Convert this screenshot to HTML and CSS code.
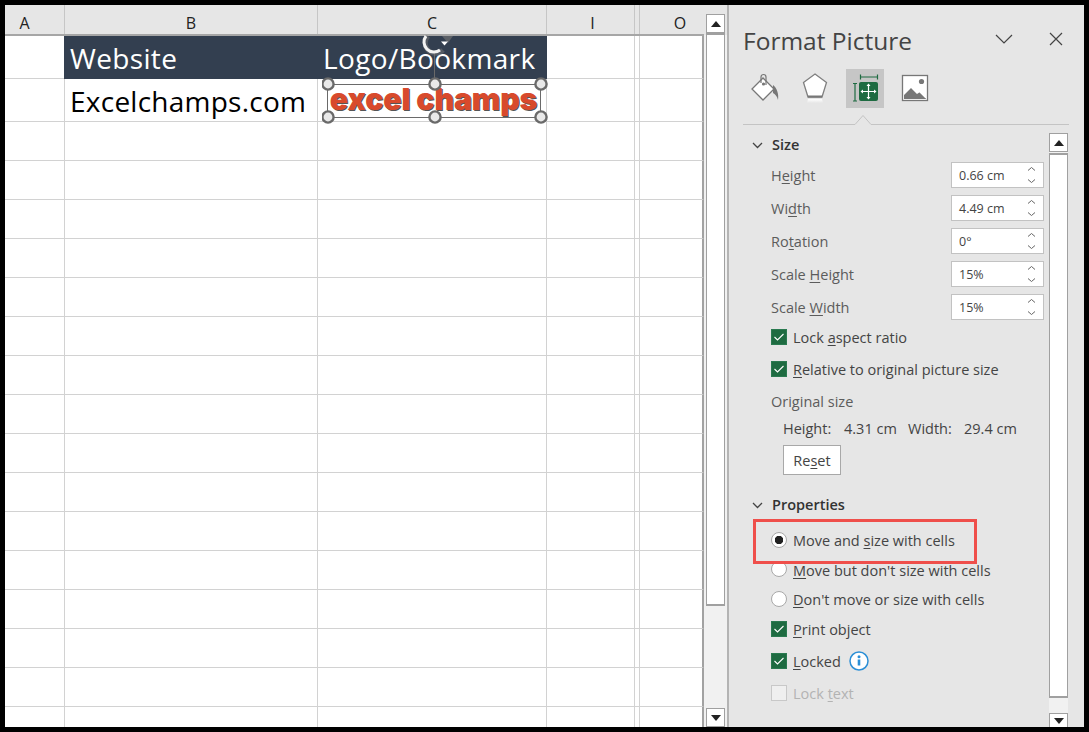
FILE: index.html
```html
<!DOCTYPE html>
<html lang="en">
<head>
<meta charset="utf-8">
<title>Format Picture</title>
<link rel="stylesheet" href="styles.css">
</head>
<body>
<div class="app">
  <main class="sheet">
    <div class="row head"><div class="ch a">A</div><div class="ch">B</div><div class="ch">C</div><div class="ch i">I</div><div class="ch"></div><div class="ch o">O</div></div>
    <div class="row r43"><div class="c"></div><div class="c dark">Website</div><div class="c dark">Logo/Bookmark</div><div class="c"></div><div class="c"></div><div class="c"></div></div>
    <div class="row r43"><div class="c"></div><div class="c val">Excelchamps.com</div><div class="c"></div><div class="c"></div><div class="c"></div><div class="c"></div></div>
    <div class="row"><div class="c"></div><div class="c"></div><div class="c"></div><div class="c"></div><div class="c"></div><div class="c"></div></div>
    <div class="row"><div class="c"></div><div class="c"></div><div class="c"></div><div class="c"></div><div class="c"></div><div class="c"></div></div>
    <div class="row"><div class="c"></div><div class="c"></div><div class="c"></div><div class="c"></div><div class="c"></div><div class="c"></div></div>
    <div class="row"><div class="c"></div><div class="c"></div><div class="c"></div><div class="c"></div><div class="c"></div><div class="c"></div></div>
    <div class="row"><div class="c"></div><div class="c"></div><div class="c"></div><div class="c"></div><div class="c"></div><div class="c"></div></div>
    <div class="row"><div class="c"></div><div class="c"></div><div class="c"></div><div class="c"></div><div class="c"></div><div class="c"></div></div>
    <div class="row"><div class="c"></div><div class="c"></div><div class="c"></div><div class="c"></div><div class="c"></div><div class="c"></div></div>
    <div class="row"><div class="c"></div><div class="c"></div><div class="c"></div><div class="c"></div><div class="c"></div><div class="c"></div></div>
    <div class="row"><div class="c"></div><div class="c"></div><div class="c"></div><div class="c"></div><div class="c"></div><div class="c"></div></div>
    <div class="row"><div class="c"></div><div class="c"></div><div class="c"></div><div class="c"></div><div class="c"></div><div class="c"></div></div>
    <div class="row"><div class="c"></div><div class="c"></div><div class="c"></div><div class="c"></div><div class="c"></div><div class="c"></div></div>
    <div class="row"><div class="c"></div><div class="c"></div><div class="c"></div><div class="c"></div><div class="c"></div><div class="c"></div></div>
    <div class="row"><div class="c"></div><div class="c"></div><div class="c"></div><div class="c"></div><div class="c"></div><div class="c"></div></div>
    <div class="row"><div class="c"></div><div class="c"></div><div class="c"></div><div class="c"></div><div class="c"></div><div class="c"></div></div>
    <div class="row"><div class="c"></div><div class="c"></div><div class="c"></div><div class="c"></div><div class="c"></div><div class="c"></div></div>
    <div class="row"><div class="c"></div><div class="c"></div><div class="c"></div><div class="c"></div><div class="c"></div><div class="c"></div></div>
    <div class="logo">excel champs</div>
    <svg class="selection" width="240" height="100" viewBox="0 0 240 100">
      <path d="M112.500 16V55" stroke="#6a6a6a" fill="none"/>
      <rect x="5.500" y="49.500" width="213" height="33" fill="none" stroke="#6a6a6a"/>
      <path d="M106 1A10 10 0 0 0 121 15" fill="none" stroke="#777" stroke-opacity=".5" stroke-width="5"/>
      <path d="M120 1h11l-5 7z" fill="#777" fill-opacity=".6"/>
      <path d="M104 1A10 10 0 0 0 118 15" fill="none" stroke="#f2f2f2" stroke-width="3"/>
      <path d="M119 6.500h7l-3.500 4z" fill="#fff"/>
      <g fill="#e9e9e9" stroke="#6a6a6a" stroke-width="2.400">
        <circle cx="6" cy="49" r="5.600"/><circle cx="113" cy="49" r="5.600"/><circle cx="219" cy="49" r="5.600"/>
        <circle cx="6" cy="82" r="5.600"/><circle cx="113" cy="82" r="5.600"/><circle cx="219" cy="82" r="5.600"/>
      </g>
    </svg>
  </main>

  <div class="vscroll">
    <div class="sb-btn"><svg width="10" height="6" viewBox="0 0 10 6"><path d="M5 0l5 6H0z" fill="#222"/></svg></div>
    <div class="sb-thumb sheet-thumb"></div>
    <div class="sb-btn bottom"><svg width="10" height="6" viewBox="0 0 10 6"><path d="M0 0h10L5 6z" fill="#222"/></svg></div>
  </div>

  <aside class="panel">
    <header class="panel-head">
      <h1 class="title">Format Picture</h1>
      <svg class="head-chev" width="18" height="10" viewBox="0 0 18 10"><path d="M1 1l8 8 8-8" fill="none" stroke="#444" stroke-width="1.200"/></svg>
      <svg class="head-x" width="14" height="14" viewBox="0 0 14 14"><path d="M1 1l12 12M13 1L1 13" fill="none" stroke="#444" stroke-width="1.200"/></svg>
    </header>

    <nav class="tabs">
      <div class="tab">
        <svg width="38" height="39" viewBox="0 0 38 39">
          <path d="M27 16c4 3 6 9 5 15-1-4-3-6-5-7z" fill="#777"/>
          <path d="M17 9l11 11-11 11L6 20z" fill="#fff" stroke="#777" stroke-width="1.300"/>
          <path d="M15 14V8a2.500 2.500 0 0 1 5 0v8" fill="none" stroke="#777" stroke-width="1.200"/>
          <circle cx="17.500" cy="15" r="1.600" fill="#777"/>
        </svg>
      </div>
      <div class="tab">
        <svg width="38" height="39" viewBox="0 0 38 39">
          <defs><linearGradient id="fade" x1="0" y1="0" x2="0" y2="1"><stop offset="0" stop-color="#fff"/><stop offset="1" stop-color="#e6e6e6"/></linearGradient></defs>
          <path d="M19 5l11.500 8.500L26 28H12L7.500 13.500z" fill="#fff" stroke="#808080" stroke-width="1.300"/>
          <path d="M12 30h14l1 4H11z" fill="url(#fade)"/>
          <path d="M12 27.500h14" stroke="#777" stroke-width="2"/>
        </svg>
      </div>
      <div class="tab active">
        <svg width="38" height="39" viewBox="0 0 38 39">
          <path d="M14.500 8h17M14.500 5.500v5M31.500 5.500v5M7 14.500h4M7 32h4M9 14.500V32" fill="none" stroke="#1e6b41" stroke-width="1.200"/>
          <rect x="13" y="13" width="19" height="19" rx="2" fill="#1e6b41"/>
          <path d="M22.500 15.500v14M15.500 22.500h14" stroke="#fff" stroke-width="1.200"/>
          <path d="M22.500 14.500l2 2.500h-4zM22.500 30.500l2-2.500h-4zM14.500 22.500l2.500-2v4zM30.500 22.500l-2.500-2v4z" fill="#fff"/>
        </svg>
      </div>
      <div class="tab">
        <svg width="38" height="39" viewBox="0 0 38 39">
          <rect x="6.500" y="6.500" width="25" height="25" fill="#fff" stroke="#777" stroke-width="1.300"/>
          <path d="M8 30V26l7-7 6 6 3-2 6 6v1z" fill="#777"/>
          <path d="M21 20l9 9" stroke="#fff" stroke-width="1.200"/>
          <circle cx="25.500" cy="12.500" r="2.600" fill="#777"/>
        </svg>
      </div>
    </nav>

    <svg class="divider" width="326" height="18" viewBox="0 0 326 18"><path d="M0 16.500h112l8-9 8 9h198" fill="none" stroke="#c4c4c4"/></svg>

    <div class="panel-body">
      <div class="content">
        <div class="sec-head first">
          <svg width="11" height="7" viewBox="0 0 11 7"><path d="M1 1l4.500 4.500L10 1" fill="none" stroke="#444" stroke-width="1.300"/></svg>
          <span>Size</span>
        </div>
        <div class="fields">
          <div class="field"><label>H<u>e</u>ight</label><div class="input"><span>0.66 cm</span><svg class="spin" width="9" height="18" viewBox="0 0 9 18"><path d="M1 4.500l3.500-3 3.500 3M1 13.500l3.500 3 3.500-3" fill="none" stroke="#666"/></svg></div></div>
          <div class="field"><label>Wi<u>d</u>th</label><div class="input"><span>4.49 cm</span><svg class="spin" width="9" height="18" viewBox="0 0 9 18"><path d="M1 4.500l3.500-3 3.500 3M1 13.500l3.500 3 3.500-3" fill="none" stroke="#666"/></svg></div></div>
          <div class="field"><label>Ro<u>t</u>ation</label><div class="input"><span>0°</span><svg class="spin" width="9" height="18" viewBox="0 0 9 18"><path d="M1 4.500l3.500-3 3.500 3M1 13.500l3.500 3 3.500-3" fill="none" stroke="#666"/></svg></div></div>
          <div class="field"><label>Scale <u>H</u>eight</label><div class="input"><span>15%</span><svg class="spin" width="9" height="18" viewBox="0 0 9 18"><path d="M1 4.500l3.500-3 3.500 3M1 13.500l3.500 3 3.500-3" fill="none" stroke="#666"/></svg></div></div>
          <div class="field"><label>Scale <u>W</u>idth</label><div class="input"><span>15%</span><svg class="spin" width="9" height="18" viewBox="0 0 9 18"><path d="M1 4.500l3.500-3 3.500 3M1 13.500l3.500 3 3.500-3" fill="none" stroke="#666"/></svg></div></div>
        </div>
        <div class="check-row"><span class="box"><svg width="16" height="16" viewBox="0 0 16 16"><path d="M3.500 8l3 3 6-6" fill="none" stroke="#fff" stroke-width="1.100"/></svg></span><span>Lock <u>a</u>spect ratio</span></div>
        <div class="check-row"><span class="box"><svg width="16" height="16" viewBox="0 0 16 16"><path d="M3.500 8l3 3 6-6" fill="none" stroke="#fff" stroke-width="1.100"/></svg></span><span><u>R</u>elative to original picture size</span></div>
        <div class="orig-title">Original size</div>
        <div class="dims"><span class="d1">Height:</span><span class="d2">4.31 cm</span><span class="d3">Width:</span><span>29.4 cm</span></div>
        <div class="reset">Re<u>s</u>et</div>

        <div class="sec-head props">
          <svg width="11" height="7" viewBox="0 0 11 7"><path d="M1 1l4.500 4.500L10 1" fill="none" stroke="#444" stroke-width="1.300"/></svg>
          <span>Properties</span>
        </div>
        <div class="radios">
          <div class="radio-row"><span class="radio on"></span><span class="radio-text">Move and <u>s</u>ize with cells</span></div>
          <div class="radio-row"><span class="radio"></span><span class="radio-text"><u>M</u>ove but don't size with cells</span></div>
          <div class="radio-row"><span class="radio"></span><span class="radio-text"><u>D</u>on't move or size with cells</span></div>
          <div class="highlight"></div>
        </div>
        <div class="check-row"><span class="box"><svg width="16" height="16" viewBox="0 0 16 16"><path d="M3.500 8l3 3 6-6" fill="none" stroke="#fff" stroke-width="1.100"/></svg></span><span><u>P</u>rint object</span></div>
        <div class="check-row"><span class="box"><svg width="16" height="16" viewBox="0 0 16 16"><path d="M3.500 8l3 3 6-6" fill="none" stroke="#fff" stroke-width="1.100"/></svg></span><span><u>L</u>ocked</span>
          <svg class="info" width="20" height="20" viewBox="0 0 20 20"><circle cx="10" cy="10" r="9" fill="#fff" stroke="#2b8fd6" stroke-width="1.500"/><path d="M10 8.500v6" stroke="#2b8fd6" stroke-width="2.600"/><circle cx="10" cy="5.800" r="1.500" fill="#2b8fd6"/></svg>
        </div>
        <div class="check-row disabled"><span class="box"></span><span>Lock <u>t</u>ext</span></div>
      </div>
      <div class="inner-scroll">
        <div class="sb-btn"><svg width="10" height="6" viewBox="0 0 10 6"><path d="M5 0l5 6H0z" fill="#222"/></svg></div>
        <div class="sb-thumb panel-thumb"></div>
        <div class="sb-btn bottom"><svg width="10" height="6" viewBox="0 0 10 6"><path d="M0 0h10L5 6z" fill="#222"/></svg></div>
      </div>
    </div>
  </aside>
</div>
</body>
</html>
```
FILE: styles.css
```css
* { box-sizing: border-box; }
html, body { margin: 0; height: 100%; background: #000; overflow: hidden; }
body { width: 1089px; height: 732px; font-family: "Open Sans", "Noto Sans", sans-serif; }

.app { display: flex; width: 1089px; height: 732px; padding: 5px; background: #000; }

/* sheet */
.sheet { position: relative; width: 699px; height: 722px; flex: none; background: #fff; overflow: hidden; }
.row { display: grid; grid-template-columns: 60px 253px 229px 88px 5px 64px; grid-template-rows: minmax(0, 1fr); height: 39px; flex: none; }
.r43 { height: 43px; }
.head { height: 31px; background: #e6e6e6; border-bottom: 2px solid #a6a6a6; }
.ch { display: flex; align-items: center; justify-content: center; font-size: 16px; color: #222; padding-top: 6px; border-right: 1px solid #c6c6c6; height: 29px; background: linear-gradient(#e6e6e6 7px, transparent 7px); }
.ch.a { padding-right: 20px; }
.ch.i { padding-left: 4px; }
.ch.o { padding-left: 16px; border-right: 0; }
.c { border-right: 1px solid #d2d2d2; border-bottom: 1px solid #d2d2d2; }
.c:last-child { border-right: 2px solid #a2a2a2; }
.dark { background: #333f50; color: #fff; border: 0; box-shadow: -1px 0 0 #333f50; font-size: 28px; letter-spacing: .35px; line-height: 45px; padding-left: 5px; }
.val { font-size: 28px; letter-spacing: .25px; line-height: 44px; padding-left: 5px; color: #000; }

.logo { position: absolute; left: 322px; top: 76px; width: 213px; height: 36px; text-align: center; font-family: Inter, "Open Sans", sans-serif; font-weight: 900; font-size: 30px; line-height: 36px; color: #d84a2c; letter-spacing: 0; text-shadow: 1px 1px 0 #555; white-space: nowrap; }
.selection { position: absolute; left: 317px; top: 30px; }

/* scrollbars */
.vscroll { width: 25px; height: 722px; flex: none; display: flex; flex-direction: column; padding: 9px 2px 0 2px; background: linear-gradient(#e6e6e6 30px, #f1f1f1 30px); border-right: 2px solid #b4b4b4; }
.sb-btn { height: 19px; flex: none; background: #fff; border: 1px solid #a0a0a0; display: flex; align-items: center; justify-content: center; }
.sb-thumb { flex: none; background: #fff; border: 1px solid #a0a0a0; border-width: 2px 1px; }
.sheet-thumb { height: 573px; }
.sb-btn.bottom { margin-top: auto; }

/* panel */
.panel { width: 355px; height: 722px; flex: none; background: #e6e6e6; display: flex; flex-direction: column; color: #444; font-size: 14.500px; }
.panel-head { height: 64px; flex: none; padding: 6px 21px 0 14px; display: flex; align-items: center; }
.title { margin: 0; font-weight: 400; font-size: 24.500px; color: #444; flex: 1; }
.head-chev { margin-right: 36px; margin-top: -2px; }
.head-x { margin-top: -2px; }
.tabs { display: flex; gap: 12px; height: 39px; flex: none; margin-left: 17px; }
.tab { width: 38px; height: 39px; }
.tab svg { display: block; }
.tab.active { background: #c6c6c6; }
.divider { display: block; flex: none; margin-left: 14px; }
.panel-body { flex: 1; display: flex; min-height: 0; }
.content { width: 320px; flex: none; padding: 0 5px 0 42px; position: relative; }
.inner-scroll { width: 19px; flex: none; margin-top: 7px; display: flex; flex-direction: column; background: #f1f1f1; height: 594px; }
.panel-thumb { height: 545px; margin-top: 1px; }
.inner-scroll .bottom { height: 14px; border-bottom: 0; }

.sec-head { height: 20px; display: flex; align-items: center; gap: 9px; margin-left: -19px; font-weight: 600; color: #333; font-size: 14.500px; }
.sec-head span { margin-top: -2px; }
.sec-head.first { margin-top: 9px; }
.sec-head.props { margin-top: 20px; }
.fields { margin-top: 7px; margin-bottom: 1px; display: flex; flex-direction: column; gap: 7px; }
u { text-underline-offset: 2px; text-decoration-thickness: 1px; }
.field { height: 26px; display: flex; align-items: center; justify-content: space-between; color: #5c5c5c; }
.input { width: 93px; height: 26px; background: #fff; border: 1px solid #c2c2c2; display: flex; align-items: center; justify-content: space-between; padding: 0 7px; color: #444; font-size: 12.500px; }
.spin { display: block; }
.check-row { height: 32px; display: flex; align-items: center; gap: 6px; color: #444; }
.box { width: 16px; height: 16px; background: #1e6b41; display: block; flex: none; box-shadow: inset 0 0 0 1px #2a7a50; }
.box svg { display: block; }
.info { margin-left: 2px; }
.disabled { color: #b3b3b3; }
.disabled .box { background: #efefef; box-shadow: inset 0 0 0 1px #c8c8c8; }
.orig-title { height: 33px; line-height: 33px; color: #5c5c5c; }
.dims { height: 22px; line-height: 22px; margin-left: 12px; display: flex; white-space: nowrap; color: #444; }
.d1 { width: 61px; }
.d2 { width: 64px; }
.d3 { width: 56px; }
.reset { width: 58px; height: 30px; margin: 5px 0 0 12px; background: #fff; border: 1px solid #a8a8a8; display: flex; align-items: center; justify-content: center; color: #444; }
.radios { position: relative; height: 88px; margin-top: 10px; }
.radio-row { height: 29.500px; display: flex; align-items: center; gap: 6px; }
.radio-text { padding-top: 2px; }
.radio { width: 16px; height: 16px; border-radius: 50%; background: #fff; border: 1px solid #a8a8a8; flex: none; }
.radio.on { background: radial-gradient(circle, #222 0 4px, #fff 4.500px); }
.highlight { position: absolute; left: -18px; top: -6px; width: 224px; height: 45px; border: 3px solid #ef4f4b; }
```
